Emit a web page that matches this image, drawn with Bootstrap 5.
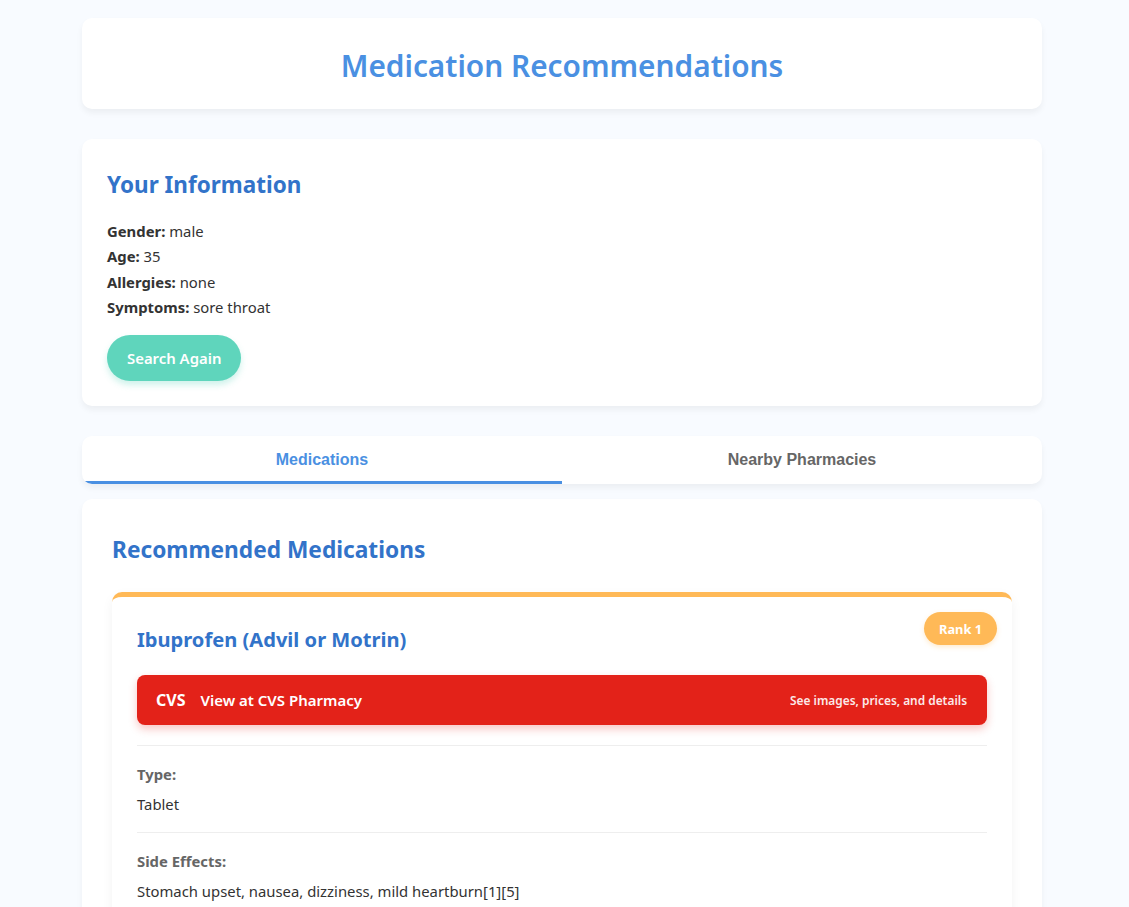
<!DOCTYPE html>
<html lang="en">
<head>
<meta charset="utf-8">
<title>Medication Recommendations</title>
<link rel="stylesheet" href="https://cdn.jsdelivr.net/npm/bootstrap@5.3.0/dist/css/bootstrap.min.css">
<style>
html,body{height:907px;overflow:hidden}
body{background:#f8fbff;font-family:"Noto Sans","Open Sans",sans-serif;color:#333;font-size:14.85px;line-height:25.6px;padding-right:5px}
.shell{max-width:1000px;margin:0 auto;padding:18px 20px 0}
.panel{background:#fff;border-radius:10px;box-shadow:0 4px 6px rgba(0,0,0,.05)}
.head-panel{padding:20px;margin-bottom:30px;text-align:center}
.head-panel h1{color:#4a90e2;font-size:29.8px;font-weight:600;line-height:51.2px;margin:0;padding-top:2px;height:51.2px}
.info-panel{padding:25px;margin-bottom:30px}
.sec-title{color:#3273c9;font-weight:700;font-size:22.5px;line-height:42.4px;margin:0 0 12px}
.info-panel p{margin:0;line-height:25.6px}
.info-panel strong{font-weight:700}
.again{display:inline-block;background:#5fd5bc;color:#fff;border:0;border-radius:30px;padding:10px 20px;font-weight:600;font-size:14.9px;margin-top:14px;box-shadow:0 4px 6px rgba(95,213,188,.3);line-height:26px}
.tabbar{overflow:hidden;margin-bottom:15px}
.tabitem{flex:1;text-align:center;font-family:"Liberation Sans",sans-serif;font-weight:700;font-size:16px;padding:15px 0 12px;line-height:18.4px;color:#666;border-bottom:3px solid transparent}
.tabitem.on{color:#4a90e2;border-bottom-color:#4a90e2}
.med-panel{padding:30px}
.med-panel .sec-title{font-size:22.7px;line-height:42.4px;margin-bottom:20px}
.medcard{position:relative;background:#fff;border-top:5px solid #ffb957;border-radius:10px;padding:25px;box-shadow:0 4px 12px rgba(0,0,0,.05)}
.rank{position:absolute;top:15px;right:15px;background:#ffb957;color:#fff;font-weight:700;font-size:12.8px;padding:6px 15px 4px;border-radius:20px;box-shadow:0 2px 5px rgba(255,185,87,.3);line-height:23px}
.medname{color:#3273c9;font-size:20.1px;font-weight:700;line-height:35.2px;margin:0 0 18px}
.cvs{display:flex;align-items:center;justify-content:space-between;background:#e32219;color:#fff;border-radius:8px;padding:13px 19px 11px;height:50px;font-weight:600;font-size:15px;box-shadow:0 4px 8px rgba(228,31,23,.25);margin-bottom:20px}
.cvs-b{margin-right:15px;font-weight:700;font-size:16px}
.cvs-s{font-size:11.9px;opacity:.9;margin-right:1px}
.fieldrow{border-top:1px solid #eee;padding:15px 0 0;margin-bottom:15px}
.fieldrow h4{font-size:14.85px;font-weight:700;color:#666;line-height:27.6px;margin:0 0 3px}
.fieldrow p{margin:0;line-height:25.6px}
</style>
</head>
<body>
<div class="shell">
  <div class="panel head-panel"><h1>Medication Recommendations</h1></div>
  <div class="panel info-panel">
    <h2 class="sec-title">Your Information</h2>
    <p><strong>Gender:</strong> male</p>
    <p><strong>Age:</strong> 35</p>
    <p><strong>Allergies:</strong> none</p>
    <p><strong>Symptoms:</strong> sore throat</p>
    <a class="again text-decoration-none" href="#">Search Again</a>
  </div>
  <div class="panel tabbar d-flex">
    <div class="tabitem on">Medications</div>
    <div class="tabitem">Nearby Pharmacies</div>
  </div>
  <div class="panel med-panel">
    <h2 class="sec-title">Recommended Medications</h2>
    <div class="medcard">
      <span class="rank">Rank 1</span>
      <h3 class="medname">Ibuprofen (Advil or Motrin)</h3>
      <a class="cvs text-decoration-none" href="#">
        <span class="d-flex align-items-center"><span class="cvs-b">CVS</span><span>View at CVS Pharmacy</span></span>
        <span class="cvs-s">See images, prices, and details</span>
      </a>
      <div class="fieldrow"><h4>Type:</h4><p>Tablet</p></div>
      <div class="fieldrow"><h4>Side Effects:</h4><p>Stomach upset, nausea, dizziness, mild heartburn[1][5]</p></div>
    </div>
  </div>
</div>
<script src="https://cdn.jsdelivr.net/npm/bootstrap@5.3.0/dist/js/bootstrap.bundle.min.js"></script>
</body>
</html>
